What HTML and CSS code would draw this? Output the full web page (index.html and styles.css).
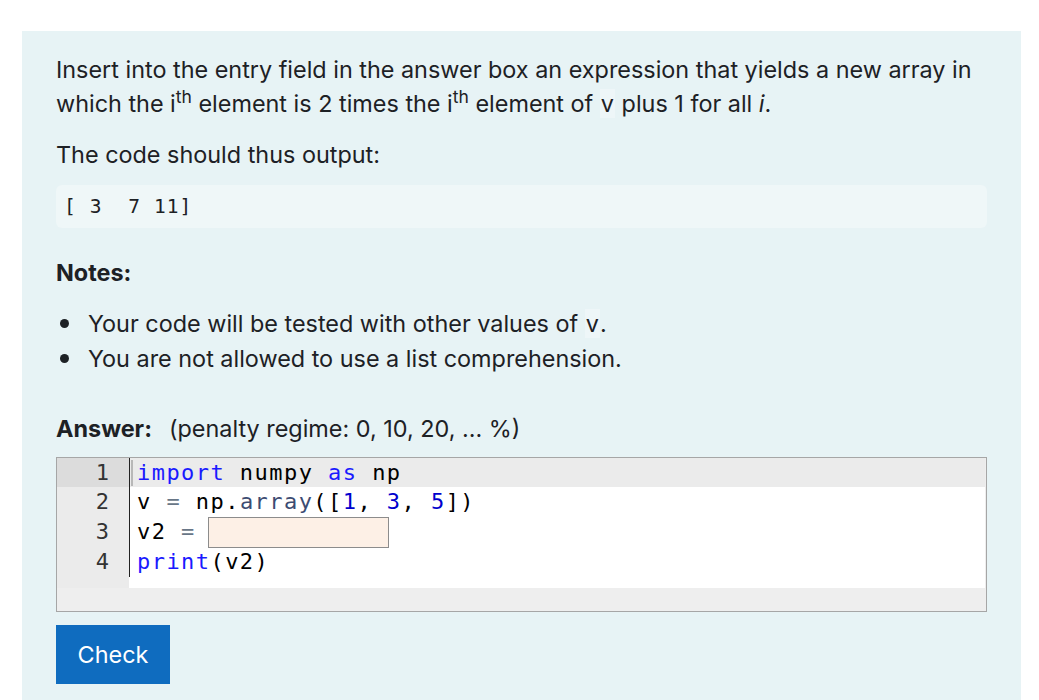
FILE: index.html
```html
<!DOCTYPE html>
<html>
<head>
<meta charset="utf-8">
<link rel="stylesheet" href="styles.css">
</head>
<body>
<div class="page">
  <div class="formulation">
    <p class="para">Insert into the entry field in the answer box an expression that yields a new array in which the i<sup>th</sup> element is 2 times the i<sup>th</sup> element of <code class="inl">v</code> plus 1 for all <em>i</em>.</p>
    <p class="para lead">The code should thus output:</p>
    <pre class="output">[ 3  7 11]</pre>
    <p class="notes-title">Notes:</p>
    <ul class="notes">
      <li>Your code will be tested with other values of <code class="inl">v</code>.</li>
      <li>You are not allowed to use a list comprehension.</li>
    </ul>
    <div class="answer-label"><b>Answer:</b><span class="penalty">(penalty regime: 0, 10, 20, ... %)</span></div>
    <div class="editor">
      <div class="ace">
        <div class="gutter">
          <div class="gnum active">1</div>
          <div class="gnum">2</div>
          <div class="gnum">3</div>
          <div class="gnum">4</div>
        </div>
        <div class="content">
          <div class="lines">
            <div class="line active"><span class="cursor"></span><span class="kw">import</span> numpy <span class="kw">as</span> np</div>
            <div class="line">v <span class="op">=</span> np.<span class="fn">array</span>([<span class="num">1</span>, <span class="num">3</span>, <span class="num">5</span>])</div>
            <div class="line">v2 <span class="op">=</span> <span class="slot"></span></div>
            <div class="line"><span class="kw">print</span>(v2)</div>
          </div>
        </div>
      </div>
      <div class="strip"></div>
    </div>
    <button class="check">Check</button>
  </div>
</div>
</body>
</html>
```
FILE: styles.css
```css
html, body {
  margin: 0;
  padding: 0;
  background: #ffffff;
}
body {
  font-family: Inter, "Noto Sans", sans-serif;
  font-size: 23.4px;
  line-height: 33.75px;
  color: #1d2125;
}
.page {
  padding: 31px 18px 0 22px;
}
.formulation {
  background: #e7f3f5;
  padding: 22px 34px 40px 34px;
  min-height: 700px;
  box-sizing: border-box;
}
.para {
  margin: 0 0 17px 0;
}
.para.lead {
  margin-bottom: 14px;
}
sup {
  font-size: 75%;
  line-height: 0;
  position: relative;
  vertical-align: baseline;
  top: -0.5em;
}
.inl {
  font-family: inherit;
  font-size: inherit;
  background: rgba(255, 255, 255, 0.3);
  padding: 0 1px;
}
.output {
  margin: 0 0 28px 0;
  background: #eff7f8;
  border-radius: 6px;
  height: 43px;
  box-sizing: border-box;
  padding: 7px 8px;
  font-family: "DejaVu Sans Mono", monospace;
  font-size: 19.5px;
  line-height: 29px;
  letter-spacing: 1.1px;
  color: #1d2125;
}
.notes-title {
  margin: 0 0 16px 0;
  font-weight: 700;
}
.notes {
  margin: 0 0 36px 0;
  padding-left: 32px;
  list-style: none;
}
.notes li {
  line-height: 35px;
  position: relative;
}
.notes li::before {
  content: "";
  position: absolute;
  left: -28px;
  top: 13px;
  width: 9px;
  height: 9px;
  border-radius: 50%;
  background: #1d2125;
}
.answer-label {
  display: flex;
  gap: 17px;
  margin-bottom: 11px;
}
.answer-label b {
  font-weight: 700;
}
.editor {
  border: 1px solid #a6a6a6;
  background: #eeeeee;
  box-sizing: border-box;
  height: 155px;
  display: flex;
  flex-direction: column;
}
.ace {
  display: flex;
  height: 130px;
}
.gutter {
  width: 72px;
  background: #ebebeb;
  font-family: "DejaVu Sans Mono", monospace;
  font-size: 22px;
  color: #333333;
}
.gnum {
  height: 29.7px;
  line-height: 29.7px;
  text-align: right;
  padding-right: 20px;
}
.gnum.active {
  background: #dcdcdc;
}
.content {
  flex: 1;
  background: #ffffff;
  margin-right: 1px;
}
.lines {
  border-left: 1px solid #222222;
  font-family: "DejaVu Sans Mono", monospace;
  font-size: 22px;
  letter-spacing: 1.45px;
  color: #000000;
}
.line {
  height: 29.7px;
  line-height: 29.7px;
  padding-left: 7px;
  white-space: pre;
  position: relative;
}
.line.active {
  background: #ebebeb;
}
.cursor {
  position: absolute;
  left: 1px;
  top: 2px;
  width: 2px;
  height: 26px;
  background: #b8b8b8;
}
.kw {
  color: #1a1aff;
}
.fn {
  color: #3c4c72;
}
.num {
  color: #0000cd;
}
.op {
  color: #687687;
}
.slot {
  display: inline-block;
  width: 181px;
  height: 31px;
  box-sizing: border-box;
  border: 1px solid #8c8c8c;
  background: #fdf0e6;
  vertical-align: middle;
  margin-left: -3px;
  margin-top: -2px;
}
.strip {
  flex: 1;
}
.check {
  margin-top: 13px;
  width: 114px;
  height: 59px;
  border: none;
  background: #0f6cbf;
  color: #ffffff;
  font-family: Inter, "Noto Sans", sans-serif;
  font-size: 23.4px;
  padding: 0;
}
```
